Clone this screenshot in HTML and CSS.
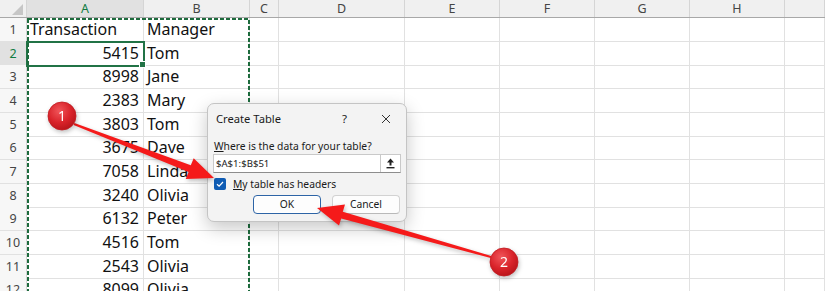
FILE: index.html
```html
<!DOCTYPE html>
<html lang="en">
  <head>
    <meta charset="UTF-8" />
    <meta name="viewport" content="width=device-width, initial-scale=1.0" />
    <title>Create Table</title>
    <link rel="stylesheet" href="styles.css">
  </head>
  <body>
    <main class="sheet">
      <div class="row head">
        <div class="corner"></div>
        <div class="col sel">A</div>
        <div class="col">B</div>
        <div class="col">C</div>
        <div class="col">D</div>
        <div class="col">E</div>
        <div class="col">F</div>
        <div class="col">G</div>
        <div class="col">H</div>
        <div class="col"></div>
      </div>
      <div class="row">
        <div class="num">1</div>
        <div class="cell">Transaction</div><div class="cell">Manager</div>
        <div class="cell"></div><div class="cell"></div><div class="cell"></div><div class="cell"></div><div class="cell"></div><div class="cell"></div><div class="cell"></div>
      </div>
      <div class="row">
        <div class="num sel">2</div>
        <div class="cell val active">5415</div><div class="cell">Tom</div>
        <div class="cell"></div><div class="cell"></div><div class="cell"></div><div class="cell"></div><div class="cell"></div><div class="cell"></div><div class="cell"></div>
      </div>
      <div class="row">
        <div class="num">3</div>
        <div class="cell val">8998</div><div class="cell">Jane</div>
        <div class="cell"></div><div class="cell"></div><div class="cell"></div><div class="cell"></div><div class="cell"></div><div class="cell"></div><div class="cell"></div>
      </div>
      <div class="row">
        <div class="num">4</div>
        <div class="cell val">2383</div><div class="cell">Mary</div>
        <div class="cell"></div><div class="cell"></div><div class="cell"></div><div class="cell"></div><div class="cell"></div><div class="cell"></div><div class="cell"></div>
      </div>
      <div class="row">
        <div class="num">5</div>
        <div class="cell val">3803</div><div class="cell">Tom</div>
        <div class="cell"></div><div class="cell"></div><div class="cell"></div><div class="cell"></div><div class="cell"></div><div class="cell"></div><div class="cell"></div>
      </div>
      <div class="row">
        <div class="num">6</div>
        <div class="cell val">3675</div><div class="cell">Dave</div>
        <div class="cell"></div><div class="cell"></div><div class="cell"></div><div class="cell"></div><div class="cell"></div><div class="cell"></div><div class="cell"></div>
      </div>
      <div class="row">
        <div class="num">7</div>
        <div class="cell val">7058</div><div class="cell">Linda</div>
        <div class="cell"></div><div class="cell"></div><div class="cell"></div><div class="cell"></div><div class="cell"></div><div class="cell"></div><div class="cell"></div>
      </div>
      <div class="row">
        <div class="num">8</div>
        <div class="cell val">3240</div><div class="cell">Olivia</div>
        <div class="cell"></div><div class="cell"></div><div class="cell"></div><div class="cell"></div><div class="cell"></div><div class="cell"></div><div class="cell"></div>
      </div>
      <div class="row">
        <div class="num">9</div>
        <div class="cell val">6132</div><div class="cell">Peter</div>
        <div class="cell"></div><div class="cell"></div><div class="cell"></div><div class="cell"></div><div class="cell"></div><div class="cell"></div><div class="cell"></div>
      </div>
      <div class="row">
        <div class="num">10</div>
        <div class="cell val">4516</div><div class="cell">Tom</div>
        <div class="cell"></div><div class="cell"></div><div class="cell"></div><div class="cell"></div><div class="cell"></div><div class="cell"></div><div class="cell"></div>
      </div>
      <div class="row">
        <div class="num">11</div>
        <div class="cell val">2543</div><div class="cell">Olivia</div>
        <div class="cell"></div><div class="cell"></div><div class="cell"></div><div class="cell"></div><div class="cell"></div><div class="cell"></div><div class="cell"></div>
      </div>
      <div class="row">
        <div class="num">12</div>
        <div class="cell val">8099</div><div class="cell">Olivia</div>
        <div class="cell"></div><div class="cell"></div><div class="cell"></div><div class="cell"></div><div class="cell"></div><div class="cell"></div><div class="cell"></div>
      </div>

      <!-- copy marquee round A1:B51 -->
      <svg class="marquee" width="825" height="291" viewBox="0 0 825 291">
        <rect x="28" y="19" width="221" height="300" fill="none" stroke="#1d6b3d" stroke-width="2" stroke-dasharray="4 2" />
      </svg>

      <div class="dlg">
        <div class="dlg-title">
          <span>Create Table</span>
          <span class="help">?</span>
          <svg class="close" width="10" height="10" viewBox="0 0 10 10">
            <path d="M1 1 L9 9 M9 1 L1 9" stroke="#333" stroke-width="1" fill="none" />
          </svg>
        </div>
        <div class="dlg-label"><u>W</u>here is the data for your table?</div>
        <div class="range">
          <span class="range-text">$A$1:$B$51</span>
          <span class="collapse">
            <svg width="9" height="11" viewBox="0 0 9 11">
              <path d="M4.5 0.5 L8 4.5 L5.5 4.5 L5.5 7.5 L3.5 7.5 L3.5 4.5 L1 4.5 Z" fill="#222" />
              <rect x="0.5" y="9" width="8" height="1.4" fill="#222" />
            </svg>
          </span>
        </div>
        <div class="chk-row">
          <span class="chk">
            <svg width="12" height="12" viewBox="0 0 12 12">
              <path d="M3 6.2 L5.1 8.2 L9 4" stroke="#fff" stroke-width="1.2" fill="none" />
            </svg>
          </span>
          <span><u>M</u>y table has headers</span>
        </div>
        <div class="btns">
          <div class="btn ok">OK</div>
          <div class="btn">Cancel</div>
        </div>
      </div>

      <!-- callout arrows -->
      <svg class="callouts" width="825" height="291" viewBox="0 0 825 291">
        <defs>
          <radialGradient id="dot" cx="40%" cy="32%" r="70%">
            <stop offset="0" stop-color="#f0555a" />
            <stop offset="0.6" stop-color="#d9232a" />
            <stop offset="1" stop-color="#b9151b" />
          </radialGradient>
        </defs>
        <g class="arrows">
          <polygon points="74.4,123.1 190.8,165.3 193.7,158.3 214,178 185.7,178.9 188.6,171.9 73.6,124.9" fill="#f51a1a" />
          <polygon points="491.3,256 342.8,211.7 345,204.5 317,208 339,225.6 341.2,218.4 490.7,258" fill="#f51a1a" />
        </g>
        <g class="dots">
          <circle cx="62" cy="116" r="14" fill="url(#dot)" stroke="#c11a20" stroke-width="0.8" />
          <text x="62" y="121" class="dot-num">1</text>
          <circle cx="504" cy="262" r="14" fill="url(#dot)" stroke="#c11a20" stroke-width="0.8" />
          <text x="504" y="267" class="dot-num">2</text>
        </g>
      </svg>
    </main>
  </body>
</html>
```

FILE: styles.css
```css
* {
  margin: 0px;
  padding: 0px;
  box-sizing: border-box;
}

body {
  width: 825px;
  height: 291px;
  overflow: hidden;
  background-color: white;
  font-family: "Noto Sans", sans-serif;
}

.sheet {
  position: relative;
  width: 825px;
  height: 291px;
  overflow: hidden;
}

/* Rækker i regnearket */
.row {
  display: grid;
  grid-template-columns: 27px 117px 106px 29px 126px 95px 95px 95px 95px 1fr;
  height: 23.67px;
}

.head {
  height: 18px;
  background-color: #f0f0f0;
  border-bottom: 1px solid #a8a8a8;
}

.corner {
  position: relative;
  border-right: 1px solid #d5d5d5;
}
.corner::after {
  content: "";
  position: absolute;
  right: 3px;
  bottom: 2px;
  border-left: 11px solid transparent;
  border-bottom: 11px solid #c6c6c6;
}

.col {
  font-size: 12.5px;
  line-height: 17px;
  text-align: center;
  color: #454545;
  border-right: 1px solid #d5d5d5;
}
.col.sel {
  color: #107c41;
  background-color: #e1e1e1;
}

.num {
  font-size: 12.5px;
  line-height: 23px;
  text-align: center;
  color: #454545;
  background-color: #f7f7f7;
  border-right: 1px solid #d5d5d5;
  border-bottom: 1px solid #e1e1e1;
}
.num.sel {
  color: #107c41;
  background-color: #e1e1e1;
}

.cell {
  position: relative;
  font-size: 16px;
  line-height: 23px;
  padding: 0 3px;
  color: #111;
  white-space: nowrap;
  border-right: 1px solid #e1e1e1;
  border-bottom: 1px solid #e1e1e1;
}
.val {
  text-align: right;
  padding-right: 4px;
}

/* Aktiv celle med grøn ramme og lille håndtag */
.active {
  outline: 2px solid #217346;
  outline-offset: -1px;
  z-index: 1;
}
.active::after {
  content: "";
  position: absolute;
  right: -3px;
  bottom: -3px;
  width: 5px;
  height: 5px;
  background-color: #217346;
  border: 1px solid white;
}

.marquee {
  position: absolute;
  left: 0;
  top: 0;
  z-index: 2;
}

/* Dialogboksen */
.dlg {
  position: absolute;
  left: 207px;
  top: 103px;
  width: 200px;
  height: 119px;
  z-index: 3;
  padding: 0 6px;
  background-color: #f3f3f3;
  border: 1px solid #c4c4c4;
  border-radius: 7px;
  box-shadow: 0 6px 18px rgba(0, 0, 0, 0.22);
  font-size: 10.3px;
  color: #1a1a1a;
}

.dlg-title {
  display: flex;
  align-items: center;
  height: 29px;
  padding-left: 2px;
  font-size: 11.2px;
}
.help {
  margin-left: auto;
  margin-right: 34px;
  font-size: 11.5px;
}
.close {
  margin-right: 9px;
}

.dlg-label {
  margin-top: 6px;
  line-height: 14px;
}
.dlg-label u,
.chk-row u {
  text-underline-offset: 1px;
}

.range {
  display: flex;
  align-items: center;
  margin-top: 1px;
  height: 19px;
  width: 188px;
  margin-left: -1px;
  background-color: white;
  border: 1px solid #c9c9c9;
  border-bottom-color: #8d8d8d;
}
.range-text {
  flex: 1;
  padding-left: 2px;
  font-size: 9.6px;
}
.collapse {
  display: flex;
  align-items: center;
  justify-content: center;
  width: 20px;
  height: 100%;
  border-left: 1px solid #c9c9c9;
}

.chk-row {
  display: flex;
  align-items: center;
  gap: 7px;
  margin-top: 5px;
  height: 12px;
}
.chk {
  display: flex;
  width: 12px;
  height: 12px;
  background-color: #0f5cb4;
  border-radius: 2px;
}

.btns {
  display: flex;
  justify-content: flex-end;
  gap: 11px;
  margin-top: 5px;
}
.btn {
  width: 68px;
  height: 19px;
  line-height: 17px;
  text-align: center;
  background-color: #fdfdfd;
  border: 1px solid #d2d2d2;
  border-bottom-color: #b9b9b9;
  border-radius: 4px;
}
.ok {
  border: 1px solid #2d64a6;
  box-shadow: inset 0 0 0 1px white;
}

/* Røde pile og nummerede cirkler */
.callouts {
  position: absolute;
  left: 0;
  top: 0;
  z-index: 4;
}
.arrows,
.dots {
  filter: drop-shadow(1px 2px 2px rgba(0, 0, 0, 0.25));
}
.dot-num {
  font-family: "Noto Sans", sans-serif;
  font-size: 14px;
  fill: white;
  text-anchor: middle;
}
```
